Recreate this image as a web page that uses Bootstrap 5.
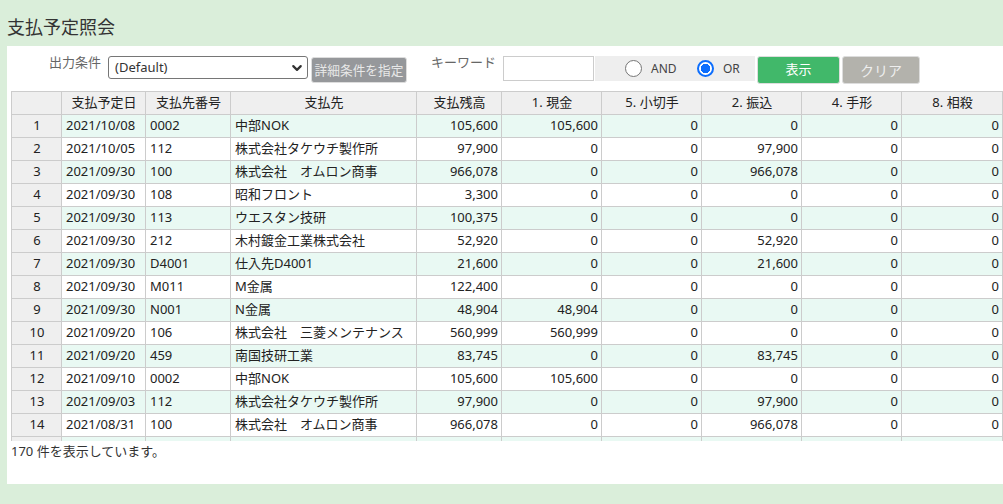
<!DOCTYPE html>
<html lang="ja">
<head>
    <meta charset="UTF-8" />
    <meta name="viewport" content="width=device-width, initial-scale=1" />
    <title>支払予定照会</title>
    <link href="https://cdn.jsdelivr.net/npm/bootstrap@5.3.0/dist/css/bootstrap.min.css" rel="stylesheet" />
    <style>
        html, body { height: 504px; overflow: hidden; }
        body { background: #daeeda; font-family: "Noto Sans", "Noto Sans CJK JP", sans-serif; color: #212529; font-size: 13px; }
        .page-title { height: 46px; padding: 16px 0 0 7px; margin: 0; font-size: 18px; line-height: 22px; color: #333; font-weight: 400; }
        .panel { margin-left: 7px; height: 438px; background: #fff; padding: 10px 0 0 4px; }
        .filter-bar { height: 35px; }
        .filter-label { color: #666; font-size: 13px; line-height: 18px; }
        .label-cond { margin-left: 38px; width: 59px; margin-top: -3px; }
        .cond-select { width: 200px; height: 23px; padding: 0 24px 0 6px; font-size: 13px; color: #333; border: 1px solid #767676; border-radius: 3px; background-position: right 4px center; background-size: 12px 10px; background-image: url("data:image/svg+xml,%3csvg xmlns='http://www.w3.org/2000/svg' viewBox='0 0 16 16'%3e%3cpath fill='none' stroke='%23333' stroke-linecap='round' stroke-linejoin='round' stroke-width='3.5' d='m2 5 6 6 6-6'/%3e%3c/svg%3e"); }
        .btn-detail { width: 96px; height: 26px; margin: 1px 0 0 3px; padding: 0; font-size: 12.7px; line-height: 1; color: #e8e8e8; background: #96989b; border: 1px solid #ddd; border-radius: 3px; white-space: nowrap; }
        .label-key { margin-left: 24px; width: 72px; margin-top: -3px; }
        .key-input { width: 91px; height: 25px; border: 1px solid #ccc; border-radius: 0; padding: 0 4px; font-size: 12px; }
        .radio-box { width: 160px; height: 25px; margin-left: 1px; background: #eee; padding-left: 30px; color: #444; }
        .radio-box .form-check-input { width: 17px; height: 17px; margin: 0; border: 1px solid #767676; background-color: #fff; }
        .radio-box .form-check-input:checked { border: 2px solid #0d6efd; background-color: #fff; background-image: radial-gradient(circle, #0d6efd 0 4.5px, #fff 5px); background-size: auto; }
        .radio-box label { font-size: 12px; margin-left: 9px; }
        .radio-box label[for=modeAnd] { width: 46px; }
        .btn-show, .btn-clear { height: 28px; padding: 0; border-radius: 3px; border: 1px solid #ddd; }
        .btn-show { width: 83px; margin-left: 2px; background: #41b86a; color: #fff; font-size: 13px; }
        .btn-clear { width: 78px; margin-left: 2px; background: #b3b2ac; color: #eee; font-size: 14px; }
        .table-wrap { height: 350px; overflow: hidden; }
        .pay-table { width: 991px; table-layout: fixed; margin: 0; border-collapse: collapse; font-size: 13px; }
        .pay-table th, .pay-table td { height: 23px; padding: 0 3px 0 4px; line-height: 20px; border: 1px solid #ccc; white-space: nowrap; overflow: hidden; color: #222; box-shadow: none; background: transparent; }
        .pay-table thead th { background: #efefef; font-weight: 400; text-align: center; padding-bottom: 2px; }
        .pay-table tbody th { background: #efefef; font-weight: 400; text-align: center; }
        .pay-table tbody tr:nth-child(odd) td { background: #e9f9f3; }
        .result-count { padding-top: 1px; line-height: 18px; color: #333; }
    </style>
</head>
<body>
<h1 class="page-title">支払予定照会</h1>

<div class="panel">
    <div class="filter-bar d-flex align-items-start">
        <div class="filter-label label-cond">出力条件</div>
        <select class="form-select cond-select">
            <option>(Default)</option>
        </select>
        <button type="button" class="btn btn-detail">詳細条件を指定</button>
        <div class="filter-label label-key">キーワード</div>
        <input type="text" class="form-control key-input" />
        <div class="radio-box d-flex align-items-center">
            <input class="form-check-input" type="radio" name="mode" id="modeAnd" />
            <label for="modeAnd">AND</label>
            <input class="form-check-input" type="radio" name="mode" id="modeOr" checked />
            <label for="modeOr">OR</label>
        </div>
        <button type="button" class="btn btn-show">表示</button>
        <button type="button" class="btn btn-clear">クリア</button>
    </div>

    <div class="table-wrap">
        <table class="table pay-table">
            <colgroup>
                <col style="width:50px" /><col style="width:84px" /><col style="width:85px" /><col style="width:186px" /><col style="width:85px" />
                <col style="width:100px" /><col style="width:100px" /><col style="width:100px" /><col style="width:100px" /><col style="width:101px" />
            </colgroup>
            <thead>
                <tr>
                    <th></th><th>支払予定日</th><th>支払先番号</th><th>支払先</th><th>支払残高</th>
                    <th>1. 現金</th><th>5. 小切手</th><th>2. 振込</th><th>4. 手形</th><th>8. 相殺</th>
                </tr>
            </thead>
            <tbody id="rows"></tbody>
        </table>
    </div>
    <div class="result-count">170 件を表示しています。</div>
</div>

<script>
    // 日付, 番号, 支払先, 残高, 現金, 振込
    const data = [
        ['2021/10/08', '0002', '中部NOK', '105,600', '105,600', '0'],
        ['2021/10/05', '112', '株式会社タケウチ製作所', '97,900', '0', '97,900'],
        ['2021/09/30', '100', '株式会社　オムロン商事', '966,078', '0', '966,078'],
        ['2021/09/30', '108', '昭和フロント', '3,300', '0', '0'],
        ['2021/09/30', '113', 'ウエスタン技研', '100,375', '0', '0'],
        ['2021/09/30', '212', '木村鍍金工業株式会社', '52,920', '0', '52,920'],
        ['2021/09/30', 'D4001', '仕入先D4001', '21,600', '0', '21,600'],
        ['2021/09/30', 'M011', 'M金属', '122,400', '0', '0'],
        ['2021/09/30', 'N001', 'N金属', '48,904', '48,904', '0'],
        ['2021/09/20', '106', '株式会社　三菱メンテナンス', '560,999', '560,999', '0'],
        ['2021/09/20', '459', '南国技研工業', '83,745', '0', '83,745'],
        ['2021/09/10', '0002', '中部NOK', '105,600', '105,600', '0'],
        ['2021/09/03', '112', '株式会社タケウチ製作所', '97,900', '0', '97,900'],
        ['2021/08/31', '100', '株式会社　オムロン商事', '966,078', '0', '966,078'],
        ['', '', '', '', '', '']
    ];
    const tbody = document.getElementById('rows');
    data.forEach((r, i) => {
        const tr = document.createElement('tr');
        const zero = r[0] ? '0' : '';
        tr.innerHTML = `
            <th>${r[0] ? i + 1 : ''}</th>
            <td>${r[0]}</td>
            <td>${r[1]}</td>
            <td>${r[2]}</td>
            <td class="text-end">${r[3]}</td>
            <td class="text-end">${r[4]}</td>
            <td class="text-end">${zero}</td>
            <td class="text-end">${r[5]}</td>
            <td class="text-end">${zero}</td>
            <td class="text-end">${zero}</td>
        `;
        tbody.appendChild(tr);
    });
</script>

<script src="https://cdn.jsdelivr.net/npm/bootstrap@5.3.0/dist/js/bootstrap.bundle.min.js"></script>
</body>
</html>
